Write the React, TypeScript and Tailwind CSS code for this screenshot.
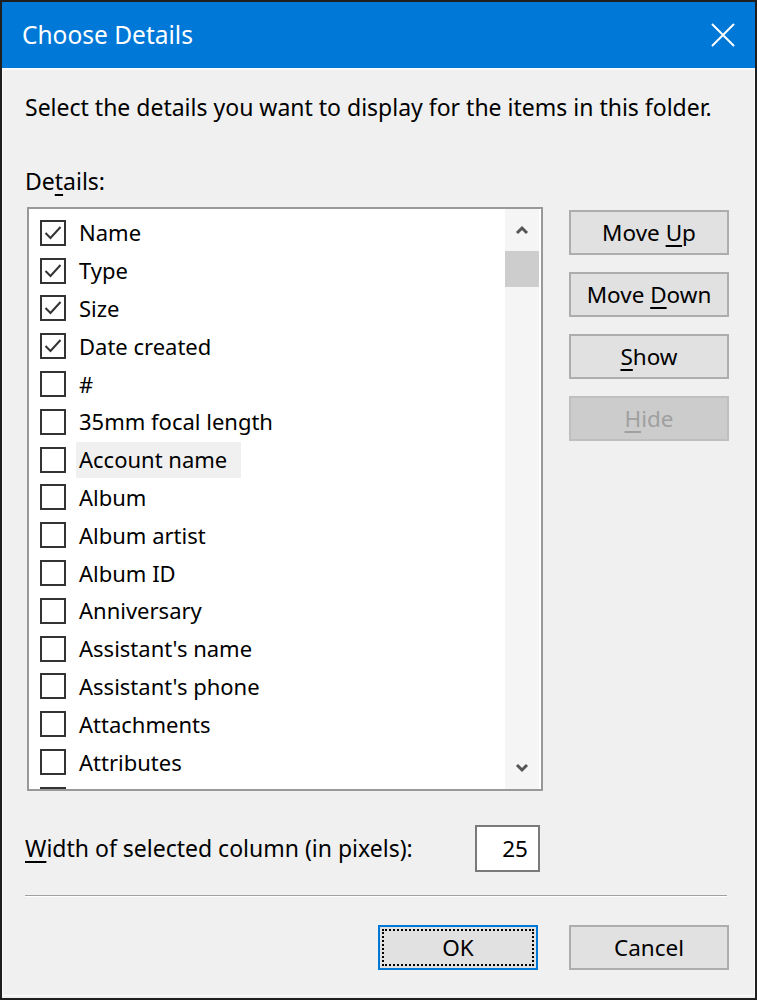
import React from "react";

const items: { label: string; checked?: boolean; hover?: boolean }[] = [
  { label: "Name", checked: true },
  { label: "Type", checked: true },
  { label: "Size", checked: true },
  { label: "Date created", checked: true },
  { label: "#" },
  { label: "35mm focal length" },
  { label: "Account name", hover: true },
  { label: "Album" },
  { label: "Album artist" },
  { label: "Album ID" },
  { label: "Anniversary" },
  { label: "Assistant's name" },
  { label: "Assistant's phone" },
  { label: "Attachments" },
  { label: "Attributes" },
  { label: "Authors" },
];

function CheckBox({ checked }: { checked?: boolean }) {
  return (
    <div className="flex h-[26px] w-[26px] shrink-0 items-center justify-center border-2 border-[#333] bg-white">
      {checked && (
        <svg width="20" height="20" viewBox="0 0 20 20" fill="none">
          <path d="M2.5 10 L7.5 15 L17.5 4" stroke="#333" strokeWidth="2" />
        </svg>
      )}
    </div>
  );
}

function Chevron({ down }: { down?: boolean }) {
  return (
    <svg width="14" height="10" viewBox="0 0 14 10" fill="none" className={down ? "rotate-180" : ""}>
      <path d="M2 8 L7 3 L12 8" stroke="#555" strokeWidth="3" />
    </svg>
  );
}

function Button({
  children,
  disabled,
  primary,
}: {
  children: React.ReactNode;
  disabled?: boolean;
  primary?: boolean;
}) {
  const base = "flex h-[45px] w-[160px] items-center justify-center border-2 text-[22.5px]";
  if (disabled)
    return (
      <div className={`${base} border-[#bfbfbf] bg-[#cccccc] text-[#a0a0a0]`}>
        <span>{children}</span>
      </div>
    );
  if (primary)
    return (
      <div className={`${base} border-[#0078d7] bg-[#e1e1e1] p-[2px] text-black`}>
        <div className="flex h-full w-full items-center justify-center border-2 border-dotted border-black">
          <span>{children}</span>
        </div>
      </div>
    );
  return (
    <div className={`${base} border-[#adadad] bg-[#e1e1e1] text-black`}>
      <span>{children}</span>
    </div>
  );
}

export default function App() {
  return (
    <div className="h-[1000px] w-[757px] border-2 border-[#1f1f1f] bg-[#f0f0f0] font-['Noto_Sans',sans-serif] text-black">
      <div className="flex h-[66px] items-center justify-between bg-[#0078d7] pl-[20px] pr-[20px] text-white">
        <span className="text-[24.5px]">Choose Details</span>
        <svg width="24" height="24" viewBox="0 0 24 24" fill="none">
          <path d="M1 1 L23 23 M23 1 L1 23" stroke="white" strokeWidth="2" />
        </svg>
      </div>
      <div className="flex h-[928px] flex-col border-x border-t-2 border-b border-[#fafafa] pl-[22px] pr-[22px]">
        <div className="mt-[23px] text-[23px] leading-[28px]">
          Select the details you want to display for the items in this folder.
        </div>
        <div className="mt-[46px] text-[23px] leading-[28px]">
          De<u className="underline-offset-4">t</u>ails:
        </div>
        <div className="mt-[12px] flex items-start">
          <div className="ml-[2px] flex h-[584px] w-[516px] border-2 border-[#999] bg-white">
            <div className="flex-1 overflow-hidden pl-[11px] pt-[5px]">
              {items.map((it) => (
                <div key={it.label} className="flex h-[37.8px] items-center">
                  <CheckBox checked={it.checked} />
                  <span
                    className={`ml-[10px] flex h-[36px] items-center whitespace-nowrap px-[3px] text-[22px] ${
                      it.hover ? "bg-[#f0f0f0] pr-[14px]" : ""
                    }`}
                  >
                    {it.label}
                  </span>
                </div>
              ))}
            </div>
            <div className="mr-[2px] flex w-[34px] flex-col bg-[#f5f5f5]">
              <div className="flex h-[42px] items-center justify-center">
                <Chevron />
              </div>
              <div className="h-[36px] bg-[#cdcdcd]" />
              <div className="flex-1" />
              <div className="flex h-[42px] items-center justify-center">
                <Chevron down />
              </div>
            </div>
          </div>
          <div className="ml-[26px] mt-[3px] flex flex-col gap-[17px]">
            <Button>
              Move <u className="underline-offset-4">U</u>p
            </Button>
            <Button>
              Move <u className="underline-offset-4">D</u>own
            </Button>
            <Button>
              <u className="underline-offset-4">S</u>how
            </Button>
            <Button disabled>
              <u className="underline-offset-4">H</u>ide
            </Button>
          </div>
        </div>
        <div className="mt-[34px] flex items-center">
          <span className="w-[450px] whitespace-nowrap text-[23px]">
            <u className="underline-offset-4">W</u>idth of selected column (in pixels):
          </span>
          <div className="flex h-[47px] w-[65px] items-center justify-end border-2 border-[#7a7a7a] bg-white pr-[10px] text-[22.5px]">
            25
          </div>
        </div>
        <div className="mr-[5px] mt-[23px] h-[2px] border-b border-white bg-[#a0a0a0]" />
        <div className="mt-[28px] flex justify-end gap-[31px] pr-[3px]">
          <Button primary>OK</Button>
          <Button>Cancel</Button>
        </div>
      </div>
    </div>
  );
}
